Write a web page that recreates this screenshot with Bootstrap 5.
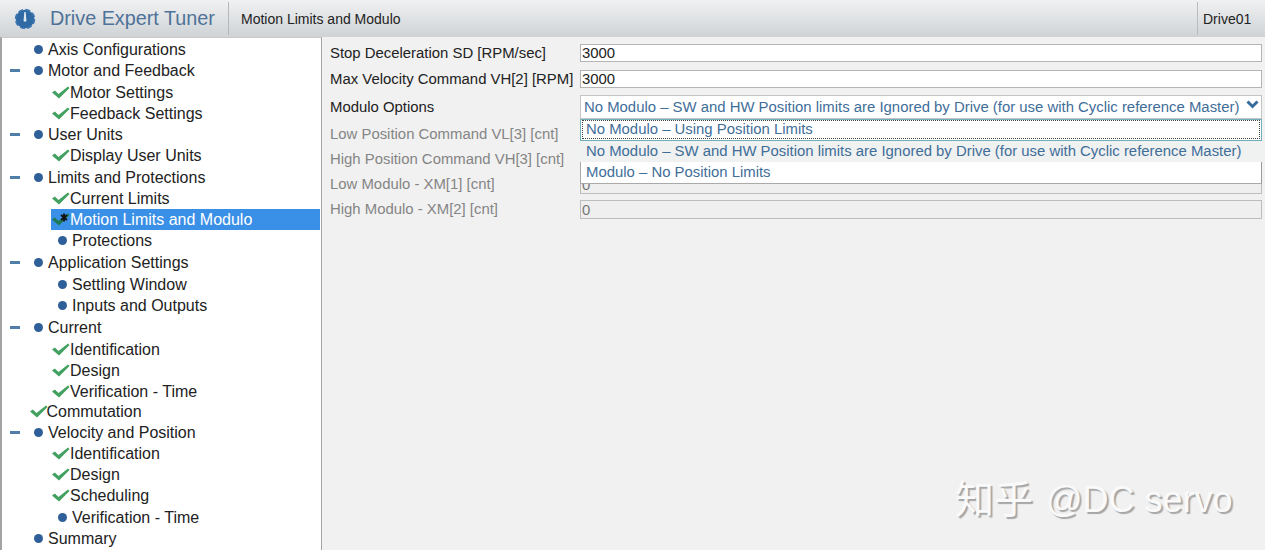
<!DOCTYPE html>
<html lang="en">
<head>
<meta charset="utf-8">
<title>Drive Expert Tuner</title>
<link href="https://cdn.jsdelivr.net/npm/bootstrap@5.3.0/dist/css/bootstrap.min.css" rel="stylesheet">
<style>
html,body{height:100%;overflow:hidden}
body{background:#f1f1f1;font-family:"Liberation Sans",Arial,sans-serif;color:#222;width:1265px;height:550px}
.topbar{height:37px;background:linear-gradient(#f0f1f2,#cfd3d6);padding:0}
.brand-box{width:229px;height:33px;border-right:1px solid #b4b8bb;padding-left:14px;gap:14px}
.brand-name{font-size:19.800px;color:#4f7299}
.page-name{font-size:14px;padding-left:12px;padding-top:2px;color:#222}
.drive-name{font-size:14px;height:33px;border-left:1px solid #b9bdc0;padding:0 4px 0 5px;width:68px;line-height:35px;color:#222}
.tree-pane{width:322px;height:513px;background:#fff;border:solid #a3a3a3;border-width:1px 1px 0 2px;border-top-color:#c9c9c9;padding-top:1px;overflow:hidden;flex:none}
.tree-row{height:21.260px;font-size:16px;line-height:21px;white-space:nowrap;color:#222}
.tree-minus{width:10px;height:3px;background:#4f7fa8;margin-left:8px;flex:none}
.tree-slot{width:18px;flex:none}
.tree-dot{width:9px;height:9px;border-radius:50%;background:#2f5f98;flex:none;margin-right:5px}
.lvl-a{padding-left:0}
.lvl-a .tree-dot{margin-left:14px}
.lvl-b{padding-left:56px}
.lvl-c{padding-left:49px}
.lvl-d{padding-left:27px}
.lvl-d .tick{margin-right:-1.500px}
.tick{width:19px;height:13px;flex:none}
.tree-sel{background:#3a8fe6;color:#fff;margin-left:49px;width:269px}
.row-down{margin-top:1px}
.row-up{margin-top:-1px}
.form-pane{padding:3px 3px 0 8px;position:relative;flex:1 1 auto}
.field-row{gap:6px;font-size:14.900px;height:25px}
.field-row.top-row{height:26px}
.field-row.sel-row{height:30px}
.field-label{width:244px;flex:none;white-space:nowrap;color:#222}
.field-row.off .field-label{color:#858585}
.field-input{width:682px;height:18.500px;flex:none;border:1px solid #b5b5b5;border-radius:0;padding:0 1px;font-size:14.900px;line-height:16px;color:#222;background:#fff;box-shadow:none}
.field-input:disabled{background:#efefef;color:#777;border-color:#bdbdbd;opacity:1}
.combo{width:682px;height:24px;flex:none;border:1px solid #c4c4c4;background:#fff;color:#3f6e99;padding:0 3px;font-size:14.900px;line-height:22px;white-space:nowrap;position:relative}
.combo-arrow{position:absolute;right:2px;top:4px;width:13px;height:9px}
.combo-list{position:absolute;left:258px;top:82px;width:682px;font-size:14.900px;color:#3f6e99;z-index:5;white-space:nowrap}
.opt{height:21.500px;line-height:20px;padding-left:6px;background:#fff}
.opt-active{border:1px solid #6fb0bd;padding:0 0 0 1px;height:21.500px}
.opt-active span{outline:1px dotted #444;outline-offset:-1px;display:block;height:19px;line-height:19px;margin-right:1px;padding-left:4px}
.opt-hover{background:#f0f1f1}
.opt-last{border:1px solid #aaa;border-top:0;padding-left:5px;border-right-color:#999}
.zh-mark{position:absolute;left:955px;top:478px;font-family:"Liberation Sans","Noto Sans CJK SC",sans-serif;line-height:44px;color:#fafafa;text-shadow:2px 2px 1px #a6a6a6;white-space:nowrap;gap:13px}
.zh-han{font-size:39px}
.zh-lat{font-size:36px}
</style>
</head>
<body>
<nav class="navbar topbar d-flex flex-nowrap align-items-center">
  <div class="brand-box d-flex align-items-center">
    <svg width="22" height="22" viewBox="0 0 22 22" aria-hidden="true">
      <circle cx="11" cy="11" r="9.300" fill="#2f6aa5"/>
      <circle cx="11" cy="11" r="9.500" fill="none" stroke="#3d78b2" stroke-width="1.500" stroke-dasharray="5 2.500"/>
      <path d="M10.300 4h1.400l.6 7.500a1.500 1.500 0 1 1-2.600 0z" fill="#dfe8f0"/>
    </svg>
    <span class="brand-name">Drive Expert Tuner</span>
  </div>
  <div class="page-name flex-grow-1">Motion Limits and Modulo</div>
  <div class="drive-name">Drive01</div>
</nav>

<div class="d-flex">
  <aside class="tree-pane">
    <svg width="0" height="0" class="position-absolute" aria-hidden="true"><symbol id="tk" viewBox="0 0 19 13"><path d="M1 6.500 3.800 4.500 7.500 8 17 .5 18.500 2 8 12.500z" fill="#42a060"/></symbol></svg>
    <div class="tree-row d-flex align-items-center lvl-a"><span class="tree-slot"></span><span class="tree-dot"></span>Axis Configurations</div>
    <div class="tree-row d-flex align-items-center lvl-a"><span class="tree-minus"></span><span class="tree-dot"></span>Motor and Feedback</div>
    <div class="tree-row d-flex align-items-center lvl-c"><svg class="tick"><use href="#tk"/></svg>Motor Settings</div>
    <div class="tree-row d-flex align-items-center lvl-c"><svg class="tick"><use href="#tk"/></svg>Feedback Settings</div>
    <div class="tree-row d-flex align-items-center lvl-a"><span class="tree-minus"></span><span class="tree-dot"></span>User Units</div>
    <div class="tree-row d-flex align-items-center lvl-c"><svg class="tick"><use href="#tk"/></svg>Display User Units</div>
    <div class="tree-row d-flex align-items-center lvl-a"><span class="tree-minus"></span><span class="tree-dot"></span>Limits and Protections</div>
    <div class="tree-row d-flex align-items-center lvl-c"><svg class="tick"><use href="#tk"/></svg>Current Limits</div>
    <div class="tree-row d-flex align-items-center tree-sel"><svg class="tick" viewBox="0 0 19 13"><path d="M1 6.500 3.800 4.500 7.500 8 17 .5 18.500 2 8 12.500z" fill="#1d7a52"/><path d="M10 2l6 5M16 2l-6 5M13 .5v8" stroke="#111" stroke-width="1.800"/></svg>Motion Limits and Modulo</div>
    <div class="tree-row d-flex align-items-center lvl-b"><span class="tree-dot"></span>Protections</div>
    <div class="tree-row d-flex align-items-center lvl-a"><span class="tree-minus"></span><span class="tree-dot"></span>Application Settings</div>
    <div class="tree-row d-flex align-items-center lvl-b row-down"><span class="tree-dot"></span>Settling Window</div>
    <div class="tree-row d-flex align-items-center lvl-b"><span class="tree-dot"></span>Inputs and Outputs</div>
    <div class="tree-row d-flex align-items-center lvl-a row-down"><span class="tree-minus"></span><span class="tree-dot"></span>Current</div>
    <div class="tree-row d-flex align-items-center lvl-c"><svg class="tick"><use href="#tk"/></svg>Identification</div>
    <div class="tree-row d-flex align-items-center lvl-c"><svg class="tick"><use href="#tk"/></svg>Design</div>
    <div class="tree-row d-flex align-items-center lvl-c"><svg class="tick"><use href="#tk"/></svg>Verification - Time</div>
    <div class="tree-row d-flex align-items-center lvl-d row-up"><svg class="tick"><use href="#tk"/></svg>Commutation</div>
    <div class="tree-row d-flex align-items-center lvl-a row-up"><span class="tree-minus"></span><span class="tree-dot"></span>Velocity and Position</div>
    <div class="tree-row d-flex align-items-center lvl-c"><svg class="tick"><use href="#tk"/></svg>Identification</div>
    <div class="tree-row d-flex align-items-center lvl-c"><svg class="tick"><use href="#tk"/></svg>Design</div>
    <div class="tree-row d-flex align-items-center lvl-c"><svg class="tick"><use href="#tk"/></svg>Scheduling</div>
    <div class="tree-row d-flex align-items-center lvl-b"><span class="tree-dot"></span>Verification - Time</div>
    <div class="tree-row d-flex align-items-center lvl-a"><span class="tree-slot"></span><span class="tree-dot"></span>Summary</div>
  </aside>

  <main class="form-pane">
    <div class="field-row top-row d-flex align-items-center"><label class="field-label">Stop Deceleration SD [RPM/sec]</label><input class="form-control field-input" value="3000"></div>
    <div class="field-row top-row d-flex align-items-center"><label class="field-label">Max Velocity Command VH[2] [RPM]</label><input class="form-control field-input" value="3000"></div>
    <div class="field-row sel-row d-flex align-items-center"><label class="field-label">Modulo Options</label>
      <div class="combo">No Modulo – SW and HW Position limits are Ignored by Drive (for use with Cyclic reference Master)
        <svg class="combo-arrow" viewBox="0 0 13 9" aria-hidden="true"><path d="M1.500 1.500 6.500 6.500 11.500 1.500" fill="none" stroke="#356c9c" stroke-width="3"/></svg>
      </div>
    </div>
    <div class="field-row off d-flex align-items-center"><label class="field-label">Low Position Command VL[3] [cnt]</label><input class="form-control field-input" value="0" disabled></div>
    <div class="field-row off d-flex align-items-center"><label class="field-label">High Position Command VH[3] [cnt]</label><input class="form-control field-input" value="0" disabled></div>
    <div class="field-row off d-flex align-items-center"><label class="field-label">Low Modulo - XM[1] [cnt]</label><input class="form-control field-input" value="0" disabled></div>
    <div class="field-row off d-flex align-items-center"><label class="field-label">High Modulo - XM[2] [cnt]</label><input class="form-control field-input" value="0" disabled></div>

    <div class="combo-list">
      <div class="opt opt-active"><span>No Modulo – Using Position Limits</span></div>
      <div class="opt opt-hover">No Modulo – SW and HW Position limits are Ignored by Drive (for use with Cyclic reference Master)</div>
      <div class="opt opt-last">Modulo – No Position Limits</div>
    </div>
  </main>
</div>
<div class="zh-mark d-flex align-items-center"><span class="zh-han">知乎</span><span class="zh-lat">@DC servo</span></div>
<script src="https://cdn.jsdelivr.net/npm/bootstrap@5.3.0/dist/js/bootstrap.bundle.min.js"></script>
</body>
</html>
